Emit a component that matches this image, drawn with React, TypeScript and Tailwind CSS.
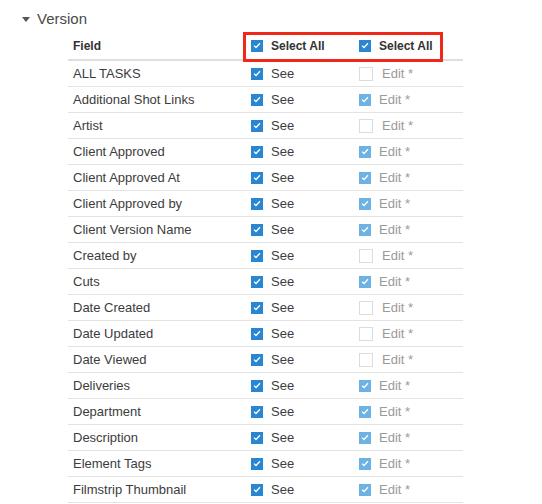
import React from 'react'

interface FieldRow {
  name: string
  edit: boolean
}

const rows: FieldRow[] = [
  { name: 'ALL TASKS', edit: false },
  { name: 'Additional Shot Links', edit: true },
  { name: 'Artist', edit: false },
  { name: 'Client Approved', edit: true },
  { name: 'Client Approved At', edit: true },
  { name: 'Client Approved by', edit: true },
  { name: 'Client Version Name', edit: true },
  { name: 'Created by', edit: false },
  { name: 'Cuts', edit: true },
  { name: 'Date Created', edit: false },
  { name: 'Date Updated', edit: false },
  { name: 'Date Viewed', edit: false },
  { name: 'Deliveries', edit: true },
  { name: 'Department', edit: true },
  { name: 'Description', edit: true },
  { name: 'Element Tags', edit: true },
  { name: 'Filmstrip Thumbnail', edit: true },
]

function Check({ light }: { light?: boolean }) {
  return (
    <span
      className={`flex h-[12px] w-[12px] shrink-0 items-center justify-center ${
        light ? 'bg-[#6cb2e4]' : 'bg-[#2b86d2]'
      }`}
    >
      <svg width="8" height="7" viewBox="0 0 8 7" fill="none">
        <path d="M1 3.6 L3 5.5 L7 1.2" stroke="white" strokeWidth="1.3" />
      </svg>
    </span>
  )
}

function Empty() {
  return <span className="h-[14px] w-[14px] shrink-0 border border-[#dcdcdc] bg-white" />
}

export default function App() {
  return (
    <div className="relative min-h-screen bg-white pt-[9px] font-['Liberation_Sans',Arial,sans-serif] text-[13px] text-[#3c3c3c]">
      {/* Section heading */}
      <div className="flex h-[20px] items-center pl-[22px]">
        <svg width="8" height="5" viewBox="0 0 8 5" className="mt-px">
          <path d="M0 0 H8 L4 5 Z" fill="#555" />
        </svg>
        <span className="ml-[7px] text-[15px] text-[#4a4a4a]">Version</span>
      </div>

      {/* Permissions table */}
      <div className="ml-[68px] mt-[3px] w-[395px]">
        <div className="flex h-[29px] items-center border-b-2 border-[#dedede] text-[12px] font-bold text-[#333]">
          <div className="w-[177px] pl-[5px]">Field</div>
          <div className="flex w-[108px] items-center gap-[8px] pl-[6px]">
            <Check />
            <span>Select All</span>
          </div>
          <div className="flex flex-1 items-center gap-[8px] pl-[6px]">
            <Check />
            <span>Select All</span>
          </div>
        </div>

        {rows.map((row) => (
          <div key={row.name} className="flex h-[26px] items-center border-b border-[#e3e3e3]">
            <div className="w-[177px] pl-[5px]">{row.name}</div>
            <div className="flex w-[108px] items-center gap-[8px] pl-[6px]">
              <Check />
              <span>See</span>
            </div>
            <div className="flex flex-1 items-center gap-[8px] pl-[6px] text-[#9a9a9a]">
              {row.edit ? <Check light /> : <Empty />}
              <span className={row.edit ? '' : 'ml-[1px]'}>Edit *</span>
            </div>
          </div>
        ))}
      </div>

      {/* Highlight annotation */}
      <div className="absolute left-[243px] top-[32px] h-[30px] w-[200px] border-[3px] border-[#f0281a]" />
    </div>
  )
}
